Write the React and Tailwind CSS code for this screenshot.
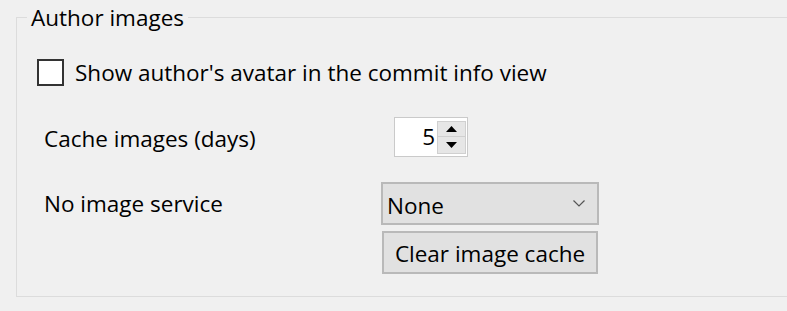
import React from "react";

function Spinner() {
  return (
    <div className="ml-[13px] flex h-[40px] w-[74px] items-center border border-[#cacaca] bg-white">
      <div className="flex-1 pr-[2px] pt-[1px] text-right leading-none">5</div>
      <div className="mr-[1px] flex flex-col">
        <div className="flex h-[16px] w-[29px] items-center justify-center border border-[#d0d0d0] bg-[#e6e6e6]">
          <svg width="11" height="6" viewBox="0 0 11 6"><path d="M0 6 L5.5 0 L11 6 Z" fill="#000" /></svg>
        </div>
        <div className="flex h-[17px] w-[29px] items-center justify-center border border-t-0 border-[#d0d0d0] bg-[#e6e6e6]">
          <svg width="11" height="6" viewBox="0 0 11 6"><path d="M0 0 L5.5 6 L11 0 Z" fill="#000" /></svg>
        </div>
      </div>
    </div>
  );
}

export default function App() {
  return (
    <div
      className="relative h-[311px] w-[787px] overflow-hidden bg-[#f0f0f0] text-[22.5px] text-black"
      style={{ fontFamily: '"Open Sans", "Noto Sans", sans-serif' }}
    >
      <div className="pl-[16px] pt-[17px]">
        <div className="relative h-[280px] w-[800px] border border-[#dcdcdc]">
          <span className="absolute left-[10px] top-[-15px] bg-[#f0f0f0] px-[4px] leading-[30px]">
            Author images
          </span>
          <div className="flex items-center pl-[20px] pt-[41px]">
            <div className="h-[27px] w-[27px] border-2 border-[#333333] bg-white" />
            <span className="ml-[11px] pt-[2px] leading-none">Show author's avatar in the commit info view</span>
          </div>
          <div className="mt-[31px] grid grid-cols-[337px_auto] pl-[27px]">
            <div className="flex h-[40px] items-center pt-[3px]">Cache images (days)</div>
            <Spinner />
            <div className="mt-[25px] flex h-[43px] items-center pt-[1px]">No image service</div>
            <div className="mt-[25px] flex flex-col">
              <div className="flex h-[43px] w-[218px] items-center justify-between border-2 border-[#b9b9b9] bg-[#e1e1e1] pl-[4px] pr-[12px]">
                <span className="pt-[4px]">None</span>
                <svg width="12" height="7" viewBox="0 0 12 7">
                  <path d="M0.5 0.5 L6 6 L11.5 0.5" fill="none" stroke="#555" strokeWidth="1.2" />
                </svg>
              </div>
              <div className="ml-[1px] mt-[6px] flex h-[43px] w-[216px] items-center justify-center border-2 border-[#b9b9b9] bg-[#e1e1e1] pt-[3px]">
                Clear image cache
              </div>
            </div>
          </div>
        </div>
      </div>
    </div>
  );
}
